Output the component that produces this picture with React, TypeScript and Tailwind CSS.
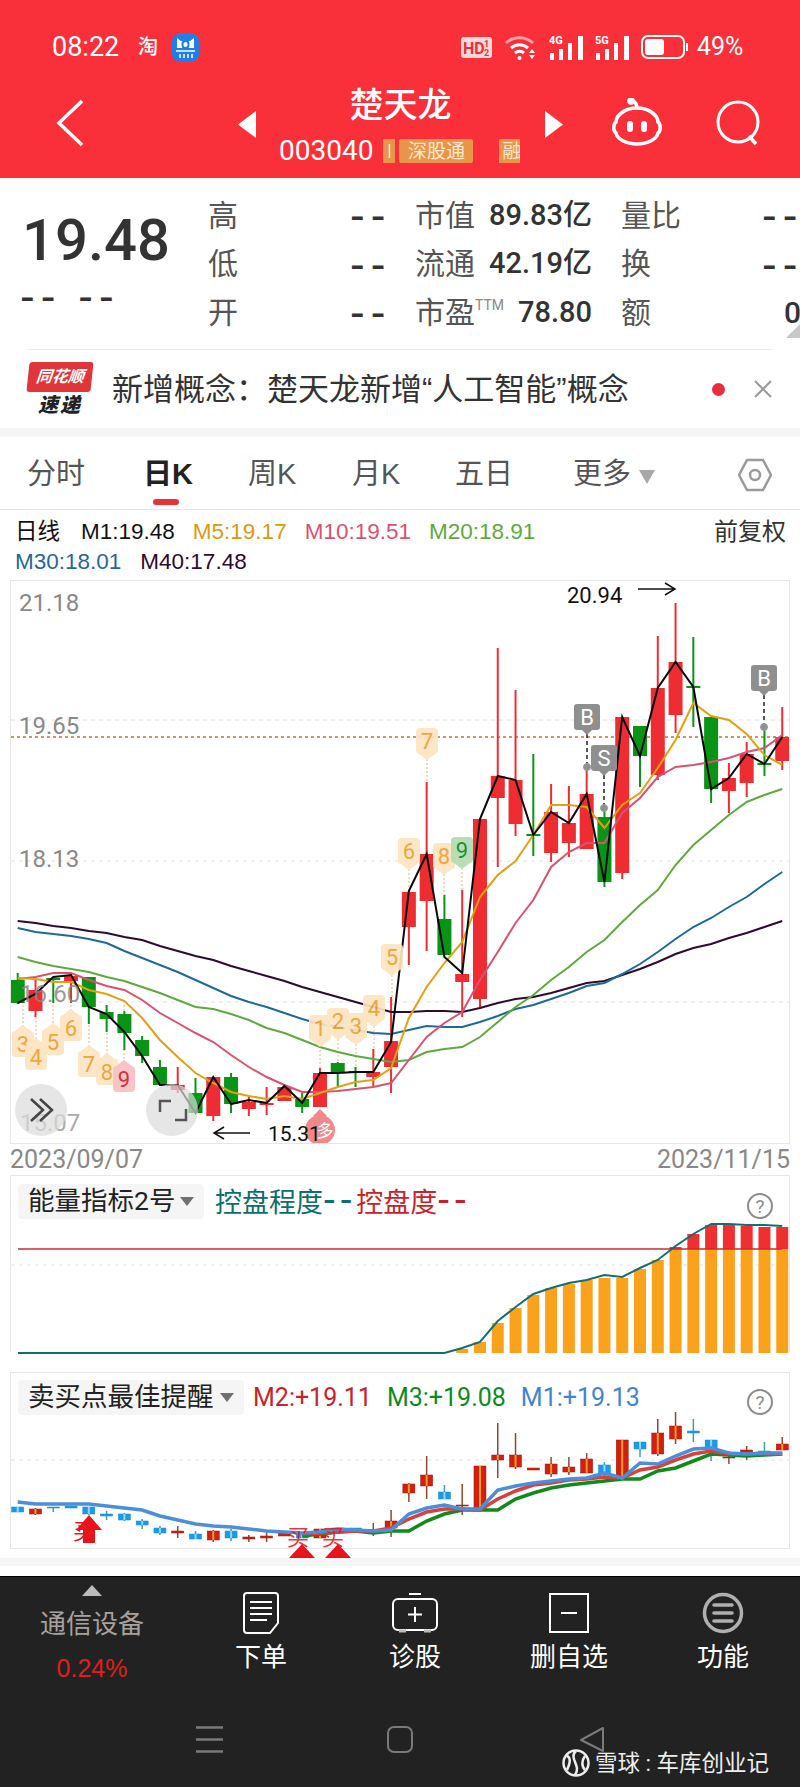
import React from "react";

const cx = (i: number) => 17.7 + 17.78 * i;
const pts = (arr: number[], from = 0) => arr.map((y, i) => `${cx(i + from)},${y}`).join(" ");

// top, bottom, high, low, colour
type Candle = [number, number, number, number, "r" | "g"];

const candles: Candle[] = [
  [980, 1003, 973, 1004, "g"], [990, 1011, 980, 1017, "r"], [978, 980, 977, 1003, "g"], [976, 981, 973, 1003, "r"],
  [977, 1007, 977, 1024, "g"], [1012, 1019, 1005, 1032, "g"], [1014, 1033, 1011, 1050, "g"], [1040, 1056, 1036, 1063, "g"],
  [1067, 1085, 1060, 1085, "g"], [1085, 1090, 1067, 1093, "r"], [1093, 1113, 1078, 1113, "g"], [1077, 1116, 1077, 1121, "r"],
  [1077, 1104, 1073, 1113, "g"], [1102, 1109, 1097, 1116, "r"], [1103, 1105, 1087, 1115, "r"], [1087, 1101, 1085, 1101, "r"],
  [1099, 1107, 1093, 1113, "g"], [1073, 1107, 1068, 1107, "r"], [1063, 1073, 1062, 1086, "g"], [1071, 1073, 1067, 1087, "g"],
  [1072, 1077, 1049, 1087, "r"], [1041, 1067, 997, 1093, "r"], [892, 927, 891, 965, "r"], [854, 901, 782, 951, "r"],
  [919, 955, 895, 955, "g"], [974, 982, 890, 1017, "r"], [819, 999, 819, 1009, "r"], [776, 798, 648, 867, "r"],
  [780, 824, 690, 836, "r"], [834, 836, 754, 856, "g"], [812, 853, 784, 862, "r"], [823, 843, 786, 857, "r"],
  [794, 849, 767, 849, "r"], [817, 882, 810, 887, "g"], [717, 873, 717, 879, "r"], [726, 756, 726, 787, "g"],
  [688, 775, 636, 780, "r"], [662, 715, 603, 733, "r"], [686, 688, 637, 727, "g"], [717, 789, 717, 803, "g"],
  [778, 791, 763, 813, "r"], [754, 783, 742, 797, "r"], [763, 765, 727, 776, "g"], [737, 761, 707, 770, "r"],
];

const m1 = [1003, 994, 977, 975, 1007, 1014, 1032, 1056, 1085, 1085, 1113, 1077, 1104, 1100, 1103, 1086, 1103, 1073, 1073, 1072, 1072, 1042, 891, 854, 957, 973, 819, 776, 780, 835, 812, 823, 794, 882, 717, 756, 688, 662, 687, 789, 778, 754, 764, 737];
const m5 = [978, 979, 982, 982, 990, 994, 1001, 1018, 1040, 1057, 1073, 1083, 1092, 1096, 1099, 1096, 1099, 1093, 1087, 1082, 1080, 1068, 1018, 987, 963, 942, 897, 875, 861, 835, 805, 805, 807, 828, 805, 793, 768, 740, 703, 716, 720, 734, 755, 765];
const m10 = [979, 977, 973, 973, 980, 986, 990, 1000, 1013, 1023, 1033, 1042, 1055, 1067, 1077, 1085, 1092, 1092, 1091, 1089, 1087, 1083, 1060, 1037, 1023, 1012, 980, 952, 923, 900, 867, 852, 843, 843, 813, 798, 777, 767, 765, 762, 758, 752, 748, 735];
const m20 = [957, 962, 966, 969, 972, 977, 981, 987, 993, 1000, 1007, 1009, 1014, 1020, 1028, 1033, 1040, 1047, 1052, 1056, 1059, 1062, 1060, 1052, 1049, 1047, 1037, 1022, 1007, 995, 980, 967, 952, 940, 922, 905, 890, 865, 845, 830, 815, 802, 795, 789];
const m30 = [928, 932, 934, 936, 939, 943, 951, 958, 965, 972, 980, 988, 996, 1002, 1007, 1013, 1019, 1024, 1027, 1030, 1033, 1034, 1030, 1026, 1027, 1027, 1022, 1016, 1009, 1005, 999, 993, 986, 983, 974, 964, 952, 939, 927, 918, 907, 897, 884, 872];
const m40 = [921, 923, 926, 928, 931, 933, 937, 940, 946, 951, 956, 960, 966, 971, 976, 981, 987, 992, 997, 1002, 1007, 1012, 1012, 1011, 1011, 1012, 1008, 1003, 999, 997, 993, 988, 983, 981, 975, 969, 962, 954, 948, 944, 938, 933, 927, 921];

// label, x, y, pointer side, tone
const markers: [string, number, number, "up" | "down", string][] = [
  ["3", 23, 1044, "up", "o"], ["4", 36, 1057, "up", "o"], ["5", 53, 1042, "up", "o"], ["6", 71, 1028, "up", "o"],
  ["7", 89, 1064, "up", "o"], ["8", 107, 1072, "up", "o"], ["9", 124, 1079, "up", "p"], ["1", 320, 1028, "down", "o"],
  ["2", 338, 1021, "down", "o"], ["3", 356, 1026, "down", "o"], ["4", 374, 1008, "down", "o"], ["5", 392, 957, "down", "o"],
  ["6", 409, 851, "down", "o"], ["7", 427, 741, "down", "o"], ["8", 444, 856, "down", "o"], ["9", 462, 850, "down", "g"],
];

const markerTone: Record<string, [string, string]> = {
  o: ["#fde4c2", "#eba02e"],
  p: ["#f9c0c4", "#d2202c"],
  g: ["#b4dcb0", "#0b8a1c"],
};

const signals: [string, number, number, number][] = [
  ["B", 587, 704, 767],
  ["S", 604, 745, 808],
  ["B", 764, 665, 727],
];

const KLineChart = () => (
  <svg viewBox="11 581 778 562" className="block w-full h-full overflow-hidden">
    {[720, 861, 1002].map((y) => (
      <line key={y} x1="11" x2="789" y1={y} y2={y} stroke="#e4e4e4" strokeWidth="1" strokeDasharray="4 4" />
    ))}
    <line x1="11" x2="789" y1="737" y2="737" stroke="#c4703a" strokeWidth="1.5" strokeDasharray="3 3" />

    <g fontSize="24" fill="#888">
      <text x="19" y="611">21.18</text>
      <text x="19" y="734">19.65</text>
      <text x="19" y="867">18.13</text>
    </g>

    {markers.map(([, x, y, dir], i) => (
      <line key={i} x1={x} x2={x} y1={dir === "up" ? 1005 : y + 14} y2={dir === "up" ? y - 14 : y + 48} stroke="#e6b878" strokeWidth="1" strokeDasharray="2 2" />
    ))}

    {candles.map(([top, bottom, hi, lo, c], i) => {
      const color = c === "r" ? "#ee2d33" : "#0a9416";
      return (
        <g key={i}>
          <line x1={cx(i)} x2={cx(i)} y1={hi} y2={lo} stroke={color} strokeWidth="2" />
          <rect x={cx(i) - 7} y={top} width="14" height={bottom - top} fill={color} />
        </g>
      );
    })}

    <polyline points={pts(m40)} fill="none" stroke="#2d0a30" strokeWidth="2" />
    <polyline points={pts(m30)} fill="none" stroke="#1f6a94" strokeWidth="2" />
    <polyline points={pts(m20)} fill="none" stroke="#5fa93f" strokeWidth="2" />
    <polyline points={pts(m10)} fill="none" stroke="#d9526f" strokeWidth="2" />
    <polyline points={pts(m5)} fill="none" stroke="#e3a012" strokeWidth="2" />
    <polyline points={pts(m1)} fill="none" stroke="#0a0a0a" strokeWidth="2" />

    <text x="20" y="1002" fontSize="24" fill="#888" opacity="0.85">16.60</text>
    <text x="20" y="1131" fontSize="24" fill="#aaa">15.07</text>

    {markers.map(([label, x, y, dir, tone], i) => {
      const [bg, fg] = markerTone[tone];
      return (
        <g key={i} opacity="0.92">
          <rect x={x - 11} y={y - 13} width="22" height="26" rx="4" fill={bg} />
          <polygon
            points={dir === "up" ? `${x - 8},${y - 13} ${x + 8},${y - 13} ${x},${y - 19}` : `${x - 8},${y + 13} ${x + 8},${y + 13} ${x},${y + 19}`}
            fill={bg}
          />
          <text x={x} y={y + 8} textAnchor="middle" fontSize="22" fill={fg}>{label}</text>
        </g>
      );
    })}

    {signals.map(([label, x, top, dot], i) => (
      <g key={i}>
        <line x1={x} x2={x} y1={top + 30} y2={dot} stroke="#222" strokeWidth="1.5" strokeDasharray="4 3" />
        <circle cx={x} cy={dot} r="3.5" fill="#8f8f8f" stroke="#9a9a9a" />
        <rect x={x - 13} y={top} width="26" height="26" rx="3" fill="#8f8f8f" />
        <polygon points={`${x - 5},${top + 26} ${x + 5},${top + 26} ${x},${top + 31}`} fill="#8f8f8f" />
        <text x={x} y={top + 21} textAnchor="middle" fontSize="22" fill="#fff">{label}</text>
      </g>
    ))}

    <circle cx="320" cy="1130" r="15" fill="#f08a8a" />
    <polygon points="313,1116 327,1116 320,1109" fill="#f08a8a" />
    <text x="325" y="1137" textAnchor="middle" fontSize="17" fill="#fff">多</text>

    <text x="567" y="603" fontSize="22" fill="#111">20.94</text>
    <path d="M638 589H675M665 583l10 6-10 6" fill="none" stroke="#111" strokeWidth="1.5" />
    <text x="268" y="1141" fontSize="21" fill="#111">15.31</text>
    <path d="M250 1133H214M224 1127l-10 6 10 6" fill="none" stroke="#111" strokeWidth="1.5" />

    <circle cx="41" cy="1110" r="26" fill="#dcdcdc" opacity="0.7" />
    <path d="M31 1099l12 11-12 11M40 1099l12 11-12 11" fill="none" stroke="#444" strokeWidth="2.5" />
    <circle cx="172" cy="1110" r="26" fill="#dcdcdc" opacity="0.7" />
    <path d="M160 1112v-11h11M186 1109v11h-11" fill="none" stroke="#555" strokeWidth="2.5" />
  </svg>
);

const barTops = [1348, 1341, 1322, 1307, 1294, 1287, 1283, 1279, 1277, 1277, 1268, 1259, 1246, 1233, 1224, 1224, 1225, 1226, 1226];
const energyLine = [1352, 1347, 1341, 1320, 1306, 1293, 1287, 1282, 1279, 1274, 1276, 1267, 1259, 1245, 1233, 1223, 1223, 1224, 1224, 1225];

const EnergyChart = () => (
  <svg viewBox="11 1219 778 133" className="block w-[778px] h-[133px] overflow-visible">
    <line x1="11" x2="789" y1="1264" y2="1264" stroke="#e4e4e4" strokeDasharray="4 4" />
    {barTops.map((top, i) => {
      const x = cx(i + 25) - 6;
      return (
        <g key={i}>
          <rect x={x} y={Math.max(top, 1248)} width="12" height={1352 - Math.max(top, 1248)} fill="#fba21d" />
          {top < 1248 && <rect x={x} y={top} width="12" height={1248 - top} fill="#ef3030" />}
        </g>
      );
    })}
    <line x1="18" x2="782" y1="1248" y2="1248" stroke="#d0282e" strokeWidth="1.5" />
    <polyline points={`18,1352 ${pts(energyLine, 24)}`} fill="none" stroke="#146f73" strokeWidth="2" />
  </svg>
);

// top, bottom, high, low, colour
const miniCandles: Candle[] = [
  [1506, 1511, 1506, 1511, "g"], [1508, 1513, 1507, 1514, "r"], [1506, 1507, 1506, 1511, "g"], [1505, 1507, 1505, 1507, "g"],
  [1506, 1513, 1506, 1514, "g"], [1513, 1515, 1510, 1519, "g"], [1513, 1519, 1512, 1520, "g"], [1520, 1524, 1518, 1528, "g"],
  [1527, 1532, 1525, 1534, "g"], [1530, 1532, 1525, 1537, "r"], [1533, 1538, 1530, 1538, "g"], [1530, 1539, 1529, 1541, "r"],
  [1530, 1537, 1528, 1540, "g"], [1536, 1538, 1534, 1541, "r"], [1535, 1537, 1531, 1541, "r"], [1532, 1535, 1532, 1535, "r"],
  [1533, 1537, 1533, 1537, "g"], [1528, 1537, 1528, 1537, "r"], [1527, 1530, 1527, 1530, "g"], [1527, 1528, 1527, 1528, "g"],
  [1529, 1531, 1522, 1535, "r"], [1520, 1527, 1509, 1536, "r"], [1483, 1492, 1482, 1501, "r"], [1474, 1485, 1455, 1498, "r"],
  [1491, 1498, 1484, 1498, "g"], [1504, 1505, 1483, 1514, "r"], [1465, 1508, 1465, 1510, "r"], [1454, 1459, 1422, 1477, "r"],
  [1454, 1466, 1432, 1468, "r"], [1467, 1469, 1467, 1469, "r"], [1463, 1473, 1456, 1476, "r"], [1466, 1471, 1456, 1474, "r"],
  [1458, 1472, 1452, 1472, "r"], [1464, 1473, 1461, 1475, "g"], [1439, 1475, 1439, 1475, "r"], [1441, 1448, 1441, 1456, "g"],
  [1432, 1453, 1418, 1455, "r"], [1425, 1438, 1411, 1443, "r"], [1430, 1432, 1418, 1441, "g"], [1439, 1448, 1439, 1460, "g"],
  [1456, 1457, 1450, 1463, "r"], [1449, 1452, 1445, 1459, "r"], [1450, 1452, 1441, 1452, "g"], [1443, 1449, 1436, 1449, "r"],
];

const sigM1 = [1501, 1503, 1503, 1503, 1503, 1505, 1507, 1509, 1515, 1519, 1523, 1525, 1526, 1528, 1530, 1531, 1532, 1531, 1528, 1529, 1530, 1529, 1513, 1507, 1504, 1508, 1508, 1489, 1485, 1482, 1480, 1478, 1477, 1472, 1477, 1462, 1463, 1455, 1448, 1447, 1452, 1453, 1452, 1452];
const sigM2 = [1533, 1532, 1531, 1530, 1530, 1527, 1518, 1511, 1508, 1508, 1509, 1498, 1490, 1484, 1482, 1479, 1478, 1476, 1477, 1469, 1466, 1459, 1453, 1450, 1453, 1453, 1453, 1453];
const sigM3 = [1535, 1533, 1531, 1530, 1532, 1530, 1530, 1520, 1513, 1509, 1509, 1509, 1498, 1492, 1487, 1484, 1482, 1480, 1478, 1478, 1470, 1467, 1460, 1453, 1454, 1455, 1454, 1453];

const SignalChart = () => (
  <svg viewBox="11 1415 778 133" className="block w-[778px] h-[133px] overflow-visible">
    <line x1="11" x2="789" y1="1459" y2="1459" stroke="#e4e4e4" strokeDasharray="4 4" />
    {miniCandles.map(([top, bottom, hi, lo, c], i) => {
      const body = c === "r" ? "#cf2010" : "#1a9ae8";
      const edge = c === "r" ? "#a01208" : "#1a86cc";
      const wick = c === "r" ? "#8a4a30" : "#4a9aa8";
      return (
        <g key={i}>
          <line x1={cx(i)} x2={cx(i)} y1={hi} y2={lo} stroke={wick} strokeWidth="1.5" />
          <rect x={cx(i) - 6} y={top} width="12" height={bottom - top} fill={body} stroke={edge} strokeWidth="0.5" />
          {bottom - top > 3 && <line x1={cx(i)} x2={cx(i)} y1={top} y2={bottom} stroke={c === "r" ? "#f79a2a" : "#8adcff"} strokeWidth="2" />}
        </g>
      );
    })}
    <polyline points={pts(sigM3, 16)} fill="none" stroke="#0f8a1c" strokeWidth="3.5" />
    <polyline points={pts(sigM2, 16)} fill="none" stroke="#d84040" strokeWidth="3.5" />
    <polyline points={pts(sigM1)} fill="none" stroke="#4a8fd8" strokeWidth="3.5" />

    <g fill="#e8141c">
      <polygon points="89,1514 102,1529 95,1529 95,1542 83,1542 83,1529 76,1529" />
      <text x="84" y="1538" fontSize="22" textAnchor="middle">买</text>
      <text x="298" y="1544" fontSize="22" textAnchor="middle" opacity="0.85">买</text>
      <text x="333" y="1544" fontSize="22" textAnchor="middle" opacity="0.85">买</text>
      <polygon points="302,1543 315,1557 289,1557" />
      <polygon points="338,1543 351,1557 325,1557" />
    </g>
  </svg>
);

const Dashes = ({ className = "" }: { className?: string }) => (
  <span className={`font-['Liberation_Sans'] text-[44px] leading-none tracking-[6px] text-[#333] ${className}`}>--</span>
);

const statRows = [
  { a: "高", b: "市值", v: "89.83亿", c: "量比", d: "--" },
  { a: "低", b: "流通", v: "42.19亿", c: "换", d: "--" },
  { a: "开", b: "市盈", v: "78.80", c: "额", d: "0" },
];

const Help = () => (
  <div className="ml-auto mr-[16px] mt-[9px] flex h-[26px] w-[26px] items-center justify-center rounded-full border-2 border-[#8c8c8c] text-[19px] leading-none text-[#8c8c8c]">?</div>
);

const Caret = () => <span className="h-0 w-0 border-x-[7px] border-t-[9px] border-x-transparent border-t-[#707070]" />;

const PanelDash = () => <span className="font-['Liberation_Sans'] text-[38px] leading-none tracking-[4px]">--</span>;

const bottomActions = [
  {
    label: "下单",
    icon: (
      <svg width="42" height="42" viewBox="0 0 42 42" fill="none" stroke="#fff" strokeWidth="2">
        <path d="M7 1h28a3 3 0 0 1 3 3v27l-8 10H7a3 3 0 0 1-3-3V4a3 3 0 0 1 3-3z" />
        <path d="M10 10h22M10 16h22M10 22h22M10 28h17" />
      </svg>
    ),
  },
  {
    label: "诊股",
    icon: (
      <svg width="46" height="42" viewBox="0 0 46 42" fill="none" stroke="#fff" strokeWidth="2">
        <rect x="1" y="7" width="44" height="31" rx="5" />
        <path d="M17 2h12M23 15v15M16 22.500h14" />
        <path d="M7 39h7M32 39h7" strokeWidth="3" stroke="#bbb" />
      </svg>
    ),
  },
  {
    label: "删自选",
    icon: (
      <svg width="40" height="40" viewBox="0 0 40 40" fill="none" stroke="#fff" strokeWidth="2">
        <rect x="1" y="1" width="38" height="38" />
        <path d="M12 20h16" />
      </svg>
    ),
  },
  {
    label: "功能",
    icon: (
      <svg width="42" height="42" viewBox="0 0 42 42" fill="none">
        <circle cx="21" cy="21" r="18.500" stroke="#b0b0b0" strokeWidth="3.500" />
        <path d="M12 13h18M12 21h18M12 29h18" stroke="#b0b0b0" strokeWidth="3.500" strokeLinecap="round" />
      </svg>
    ),
  },
];

const App = () => {
  return (
    <div className="relative h-[1787px] w-[800px] overflow-hidden bg-white font-['Roboto','Noto_Sans_CJK_SC',sans-serif] text-[#333]">
      {/* header */}
      <header className="h-[178px] bg-[#f9303a] text-white">
        <div className="flex h-[85px] items-center pl-[52px] pt-[9px]">
          <span className="w-[66px] text-[27px]">08:22</span>
          <span className="ml-[20px] text-[20px] font-medium">淘</span>
          <svg className="ml-[14px]" width="27" height="27" viewBox="0 0 27 27">
            <rect width="27" height="27" rx="7" fill="#1f7fe8" />
            <path d="M5 4l4 3h9l4-3v10H5z" fill="#fff" />
            <rect x="10.500" y="7" width="6" height="7" rx="3" fill="none" stroke="#1f7fe8" strokeWidth="2" />
            <path d="M4 17h19M8 20v4M12 20v4M16 20v4M20 20v4" stroke="#fff" strokeWidth="1.500" />
          </svg>
          <svg className="ml-[262px]" width="31" height="21" viewBox="0 0 31 21">
            <rect width="31" height="21" rx="3" fill="#fbd9d9" />
            <text x="2" y="17" fontSize="16" fontWeight="700" fill="#e8323a">HD</text>
            <text x="23" y="10" fontSize="9" fontWeight="700" fill="#e8323a">1</text>
            <text x="23" y="19" fontSize="9" fontWeight="700" fill="#e8323a">2</text>
          </svg>
          <svg className="ml-[13px]" width="33" height="26" viewBox="0 0 33 26" fill="none">
            <path d="M1 9a20 20 0 0 1 27 0" stroke="#f9a0a0" strokeWidth="3" />
            <path d="M6 14a13 13 0 0 1 17 0" stroke="#fff" strokeWidth="3" />
            <path d="M10 19a7 7 0 0 1 9 0" stroke="#fff" strokeWidth="3" />
            <circle cx="14.500" cy="24" r="2" fill="#fff" />
            <path d="M27 15l3 4h-6zM27 25l3-4h-6z" fill="#fff" />
          </svg>
          {["4G", "5G"].map((g) => (
            <svg key={g} className="ml-[11px]" width="35" height="26" viewBox="0 0 35 26">
              <text x="0" y="10" fontSize="11" fontWeight="700" fill="#fff">{g}</text>
              <rect x="1" y="19" width="4" height="7" fill="#fff" />
              <rect x="10" y="15" width="4" height="11" fill="#fff" />
              <rect x="19" y="9" width="4" height="17" fill="#fff" />
              <rect x="29" y="2" width="5" height="24" fill="#fff" />
            </svg>
          ))}
          <svg className="ml-[11px]" width="47" height="24" viewBox="0 0 47 24">
            <rect x="1" y="1" width="42" height="22" rx="6" fill="none" stroke="#fff" strokeWidth="2" />
            <rect x="4" y="4" width="19" height="16" rx="3" fill="#fff" />
            <rect x="45" y="8" width="2" height="8" fill="#fff" />
          </svg>
          <span className="ml-[9px] text-[25px]">49%</span>
        </div>
        <div className="flex h-[93px] items-start">
          <svg className="ml-[54px] mt-[13px]" width="32" height="50" viewBox="0 0 32 50" fill="none" stroke="#fff" strokeWidth="3.500">
            <path d="M28 3L5 25l23 22" />
          </svg>
          <svg className="ml-[152px] mt-[26px]" width="18" height="27" viewBox="0 0 18 27"><polygon points="18,0 18,27 0,13.500" fill="#fff" /></svg>
          <div className="ml-[23px] w-[243px] overflow-hidden text-center">
            <div className="h-[40px] text-[34px] font-medium leading-[40px]">楚天龙</div>
            <div className="mt-[10px] flex h-[32px] items-center whitespace-nowrap">
              <span className="text-[28px] leading-none">003040</span>
              <span className="ml-[10px] flex h-[24px] w-[12px] shrink-0 items-center justify-center bg-[#e8954a] text-[16px] leading-none">|</span>
              <span className="ml-[4px] flex h-[24px] w-[74px] shrink-0 items-center justify-center rounded-[2px] bg-[#e8954a] text-[19px] leading-none text-[#fde8d0]">深股通</span>
              <span className="ml-[26px] flex h-[24px] w-[21px] shrink-0 items-center overflow-hidden bg-[#e8954a] pl-[3px] text-[19px] leading-none text-[#fde8d0]">融</span>
            </div>
          </div>
          <svg className="ml-[23px] mt-[26px]" width="18" height="27" viewBox="0 0 18 27"><polygon points="0,0 0,27 18,13.500" fill="#fff" /></svg>
          <svg className="ml-[47px] mt-[13px]" width="54" height="48" viewBox="0 0 54 48" fill="none" stroke="#fff" strokeWidth="3.500">
            <path d="M27 10c13 0 21 8 21 14 3 2 3 9 0 11-1 6-10 11-21 11S7 41 6 35c-3-2-3-9 0-11 0-6 8-14 21-14z" />
            <path d="M27 10c0-4-2-6-5-8" />
            <circle cx="21" cy="3" r="2" fill="#fff" />
            <rect x="17" y="23" width="6" height="11" rx="3" fill="#fff" stroke="none" />
            <rect x="31" y="23" width="6" height="11" rx="3" fill="#fff" stroke="none" />
          </svg>
          <svg className="ml-[52px] mt-[15px]" width="46" height="46" viewBox="0 0 46 46" fill="none" stroke="#fff" strokeWidth="3">
            <circle cx="22" cy="22" r="20" />
            <path d="M33 36l7 8" strokeWidth="3.500" />
          </svg>
        </div>
      </header>

      {/* quote */}
      <section className="relative flex h-[171px] pt-[13px]">
        <div className="w-[208px] shrink-0 pl-[22px]">
          <div className="h-[95px] text-[58px] font-medium leading-[98px] text-[#333]">19.48</div>
          <div className="flex h-[20px] items-center text-[#333]">
            <Dashes className="ml-[-2px]" />
            <Dashes className="ml-[17px]" />
          </div>
        </div>
        <div className="flex flex-col">
          {statRows.map((r) => (
            <div key={r.a} className="flex h-[48.500px] items-center whitespace-nowrap text-[30px] text-[#555]">
              <div className="flex w-[207px] items-center">
                <span className="w-[142px]">{r.a}</span>
                <Dashes />
              </div>
              <div className="flex w-[206px] items-center">
                <div className="flex w-[177px] items-center">
                  <span>{r.b}</span>
                  {r.b === "市盈" && <span className="self-start pt-[8px] text-[14px] leading-none text-[#888]">TTM</span>}
                  <span className="ml-auto text-[29px] font-medium text-[#333]">{r.v}</span>
                </div>
              </div>
              <div className="flex items-center">
                <span className="w-[141px]">{r.c}</span>
                {r.d === "--" ? <Dashes /> : <span className="ml-[22px] font-medium text-[#333]">{r.d}</span>}
              </div>
            </div>
          ))}
        </div>
        <span className="absolute bottom-[11px] right-0 h-0 w-0 border-b-[14px] border-l-[14px] border-b-[#c8c8c8] border-l-transparent" />
      </section>

      {/* news */}
      <div className="mx-[27px] border-t border-[#ececec]" />
      <div className="flex h-[78px] items-center pl-[28px]">
        <div className="w-[64px]">
          <div className="flex h-[30px] -skew-x-6 items-center justify-center rounded-[3px] bg-[#e0353a] text-[16px] font-bold italic leading-none text-white">同花顺</div>
          <div className="mt-[2px] text-center text-[20px] font-black italic leading-[22px] tracking-[2px] text-[#222]">速递</div>
        </div>
        <div className="ml-[20px] whitespace-nowrap pt-[3px] font-['Liberation_Sans','Noto_Sans_CJK_SC',sans-serif] text-[31px] text-[#333]">新增概念：楚天龙新增“人工智能”概念</div>
        <span className="ml-auto h-[13px] w-[13px] rounded-full bg-[#e92d3b]" />
        <svg className="ml-[28px] mr-[27px]" width="20" height="20" viewBox="0 0 20 20" stroke="#999" strokeWidth="2"><path d="M2 2l16 16M18 2L2 18" /></svg>
      </div>
      <div className="h-[9px] bg-[#f5f5f5]" />

      {/* tabs */}
      <nav className="flex h-[73px] items-center border-b border-[#e6e6e6] pl-[27px] pt-[4px] font-['Liberation_Sans','Noto_Sans_CJK_SC',sans-serif] text-[29px] text-[#555]">
        <span className="w-[116px]">分时</span>
        <span className="relative w-[105px] font-bold text-[#222]">
          日K
          <span className="absolute left-[10px] top-[46px] h-[6px] w-[26px] rounded-full bg-[#e8323a]" />
        </span>
        <span className="w-[104px]">周K</span>
        <span className="w-[103px]">月K</span>
        <span className="w-[118px]">五日</span>
        <span className="flex w-[165px] items-center">
          更多
          <span className="ml-[8px] mt-[3px] h-0 w-0 border-x-[8px] border-t-[14px] border-x-transparent border-t-[#a8a8a8]" />
        </span>
        <svg width="34" height="34" viewBox="0 0 34 34" fill="none" stroke="#9a9a9a" strokeWidth="2.500">
          <polygon points="9,2 25,2 33,17 25,32 9,32 1,17" />
          <circle cx="17" cy="17" r="5" />
        </svg>
      </nav>

      {/* ma legend */}
      <div className="h-[70px] pt-[7px] font-['Liberation_Sans','Noto_Sans_CJK_SC',sans-serif] text-[22.500px] leading-[30px]">
        <div className="flex gap-[18px] pl-[15px] pr-[14px]">
          <span className="mr-[3px] text-[#111]">日线</span>
          <span className="text-[#111]">M1:19.48</span>
          <span className="text-[#d89a12]">M5:19.17</span>
          <span className="text-[#d9526f]">M10:19.51</span>
          <span className="text-[#5fa93f]">M20:18.91</span>
          <span className="ml-auto text-[24px] text-[#333]">前复权</span>
        </div>
        <div className="flex gap-[19px] pl-[15px]">
          <span className="text-[#1f6a94]">M30:18.01</span>
          <span className="text-[#2d0a30]">M40:17.48</span>
        </div>
      </div>

      {/* main chart */}
      <div className="mx-[10px] h-[564px] border border-[#e6e6e6]">
        <KLineChart />
      </div>
      <div className="mx-[10px] flex h-[31px] items-center justify-between text-[25px] leading-none text-[#888]">
        <span>2023/09/07</span>
        <span>2023/11/15</span>
      </div>

      {/* energy panel */}
      <div className="mx-[10px] h-[177px] border-x border-t border-[#e6e6e6]">
        <div className="flex h-[44px] items-start pl-[7px] pt-[8px]">
          <div className="flex h-[35px] w-[186px] items-center rounded-[4px] bg-[#f5f5f5] pl-[10px] text-[26.500px] leading-none text-[#222]">
            <span className="w-[152px] whitespace-nowrap">能量指标2号</span>
            <Caret />
          </div>
          <span className="ml-[11px] flex h-[35px] items-center whitespace-nowrap text-[27px]">
            <span className="text-[#0d6e6e]">控盘程度<PanelDash /></span>
            <span className="text-[#c8232c]">控盘度<PanelDash /></span>
          </span>
          <Help />
        </div>
        <EnergyChart />
      </div>

      {/* signal panel */}
      <div className="mx-[10px] mt-[20px] h-[177px] border border-[#e6e6e6]">
        <div className="flex h-[43px] items-start pl-[7px] pt-[7px]">
          <div className="flex h-[35px] w-[226px] items-center rounded-[4px] bg-[#f5f5f5] pl-[10px] text-[26.500px] leading-none text-[#222]">
            <span className="w-[192px] whitespace-nowrap">卖买点最佳提醒</span>
            <Caret />
          </div>
          <div className="ml-[9px] flex gap-[15px] whitespace-nowrap text-[25px] leading-[35px]">
            <span className="text-[#c8232c]">M2:+19.11</span>
            <span className="text-[#0f8a1c]">M3:+19.08</span>
            <span className="text-[#3f86cf]">M1:+19.13</span>
          </div>
          <Help />
        </div>
        <SignalChart />
      </div>

      <div className="mt-[9px] h-[8px] bg-[#f5f5f5]" />

      {/* bottom bar */}
      <footer className="absolute inset-x-0 bottom-0 h-[211px] border-t border-black bg-[#222]">
        <div className="flex h-[140px]">
          <div className="flex w-[184px] flex-col items-center pt-[8px]">
            <span className="h-0 w-0 border-x-[10px] border-b-[11px] border-x-transparent border-b-[#bdbdbd]" />
            <span className="mt-[10px] text-[26px] leading-[36px] text-[#a8a29e]">通信设备</span>
            <span className="mt-[11px] font-['Liberation_Sans'] text-[25px] leading-[30px] text-[#e01e1e]">0.24%</span>
          </div>
          {bottomActions.map((a) => (
            <div key={a.label} className="flex w-[154px] flex-col items-center pt-[15px]">
              <div className="flex h-[42px] items-center">{a.icon}</div>
              <span className="mt-[6px] text-[26px] leading-[34px] text-white">{a.label}</span>
            </div>
          ))}
        </div>
        <div className="mt-[9px] flex items-start pl-[196px]">
          <svg width="27" height="27" viewBox="0 0 27 27" stroke="#7a7a7a" strokeWidth="2.500"><path d="M0 1.500h27M0 13.500h27M0 25.500h27" /></svg>
          <svg className="ml-[164px]" width="26" height="27" viewBox="0 0 26 27" fill="none" stroke="#7a7a7a" strokeWidth="2"><rect x="1" y="1" width="24" height="25" rx="6" /></svg>
          <svg className="ml-[166px]" width="26" height="27" viewBox="0 0 26 27" fill="none" stroke="#7a7a7a" strokeWidth="2"><path d="M24 2v23L2 14z" strokeLinejoin="round" /></svg>
        </div>
        <div className="absolute left-[560px] top-[172px] flex items-center text-[#eee]">
          <svg width="33" height="28" viewBox="0 0 33 28" fill="none" stroke="#eee" strokeWidth="2.500">
            <circle cx="16" cy="14" r="12.500" />
            <path d="M16 2c-8 7 6 15-1 24" />
            <path d="M7 7c5 2 2 10 0 14M25 7c-3 4-4 10 0 14" />
          </svg>
          <span className="ml-[2px] whitespace-nowrap text-[22.500px] leading-none">雪球 : 车库创业记</span>
        </div>
      </footer>
    </div>
  );
};

export default App;
